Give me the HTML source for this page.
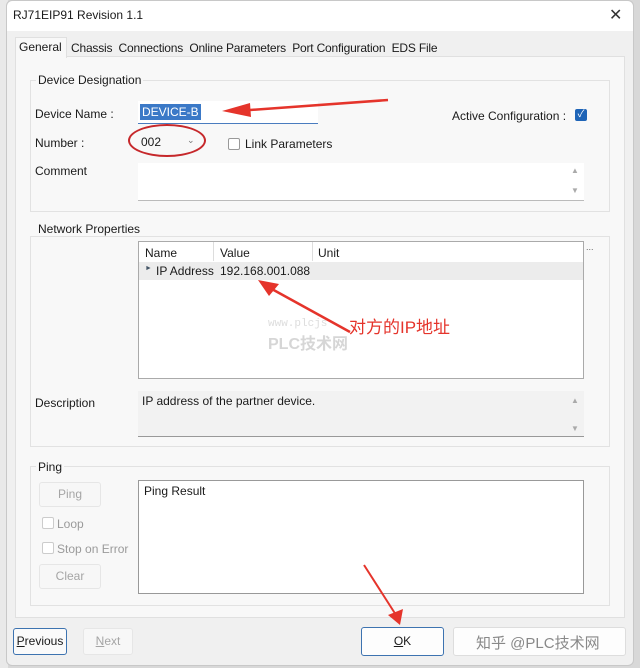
<!DOCTYPE html>
<html><head><style>
*{margin:0;padding:0;box-sizing:border-box}
body{width:640px;height:668px;position:relative;background:#d8d8d8;font-family:"Liberation Sans","Noto Sans CJK SC",sans-serif;font-size:12px;color:#1a1a1a;overflow:hidden}
.a{position:absolute}
.grp{position:absolute;border:1px solid #e2e2e2;background:#f8f8f8}
.box{position:absolute;background:#fff;border:1px solid #cfcfcf}
.btn{position:absolute;border:1px solid #e6e6e6;background:#f7f7f7;color:#a5a5a5;text-align:center;border-radius:3px}
.cb{position:absolute;width:12px;height:12px;border:1px solid #999;border-radius:2px;background:#fff}
</style></head><body>
<div class="a" style="left:0;top:0;width:8px;height:668px;background:#e9e9e9"></div>
<div class="a" style="left:6px;top:0;width:628px;height:666px;background:#f0f0f0;border:1px solid #c8c8c8;border-radius:6px"></div>
<div class="a" style="left:7px;top:1px;width:626px;height:30px;background:#fff;border-radius:6px 6px 0 0"></div>
<div class="a" style="left:13px;top:8px;font-size:12px">RJ71EIP91 Revision 1.1</div>
<div class="a" style="left:609px;top:5px;font-size:16px;color:#333">✕</div>
<div class="a" style="left:15px;top:56px;width:610px;height:562px;background:#f8f8f8;border:1px solid #e0e0e0"></div>
<div class="a" style="left:15px;top:37px;width:52px;height:21px;background:#f8f8f8;border:1px solid #e0e0e0;border-bottom:none"></div>
<div class="a" style="left:19px;top:40px;font-size:12px">General</div>
<div class="a" style="left:71px;top:41px;font-size:12px;letter-spacing:-0.2px">Chassis&nbsp; Connections&nbsp; Online Parameters&nbsp; Port Configuration&nbsp; EDS File</div>

<div class="grp" style="left:30px;top:80px;width:580px;height:132px"></div>
<div class="a" style="left:36px;top:73px;font-size:12px;background:#f8f8f8;padding:0 2px">Device Designation</div>
<div class="a" style="left:35px;top:107px">Device Name :</div>
<div class="a" style="left:138px;top:101px;width:180px;height:23px;background:#fff;border-bottom:1px solid #4a7cbf"></div>
<div class="a" style="left:140px;top:104px;background:#3b79c7;color:#fff;padding:0 2px;height:16px;line-height:16px">DEVICE-B</div>
<div class="a" style="left:452px;top:109px;font-size:12px">Active Configuration :</div>
<div class="a" style="left:575px;top:109px;width:12px;height:12px;background:#1e64b7;border-radius:2px;color:#fff;font-size:10px;line-height:12px;text-align:center">✓</div>
<div class="a" style="left:35px;top:136px">Number :</div>
<div class="a" style="left:141px;top:135px">002</div>
<div class="a" style="left:187px;top:135px;font-size:9px;color:#777">⌄</div>
<div class="a" style="left:128px;top:124px;width:78px;height:33px;border:2px solid #c6282b;border-radius:50%"></div>
<div class="cb" style="left:228px;top:138px"></div>
<div class="a" style="left:245px;top:137px;font-size:12px">Link Parameters</div>
<div class="a" style="left:35px;top:164px">Comment</div>
<div class="box" style="left:138px;top:163px;width:446px;height:38px;border:none;border-bottom:1px solid #bbb"></div>
<div class="a" style="left:571px;top:166px;font-size:8px;color:#aaa">▲</div>
<div class="a" style="left:571px;top:186px;font-size:8px;color:#aaa">▼</div>
<svg class="a" style="left:220px;top:96px" width="170" height="22"><path d="M168 4 L30 14" stroke="#e5342b" stroke-width="2.5" fill="none"/><path d="M2 15 L30 7 L31 21 Z" fill="#e5342b"/></svg>

<div class="grp" style="left:30px;top:236px;width:580px;height:211px"></div>
<div class="a" style="left:36px;top:222px;font-size:12px;background:#f8f8f8;padding:0 2px">Network Properties</div>
<div class="box" style="left:138px;top:241px;width:446px;height:138px;border-color:#aaa"></div>
<div class="a" style="left:213px;top:242px;width:1px;height:19px;background:#ddd"></div>
<div class="a" style="left:312px;top:242px;width:1px;height:19px;background:#ddd"></div>
<div class="a" style="left:145px;top:246px">Name</div>
<div class="a" style="left:220px;top:246px">Value</div>
<div class="a" style="left:318px;top:246px">Unit</div>
<div class="a" style="left:139px;top:262px;width:444px;height:18px;background:#ececec"></div>
<div class="a" style="left:145px;top:265px;font-size:7px;color:#456">►</div>
<div class="a" style="left:156px;top:264px">IP Address</div>
<div class="a" style="left:220px;top:264px">192.168.001.088</div>
<div class="a" style="left:586px;top:242px;font-size:9px;color:#666">...</div>
<div class="a" style="left:268px;top:330px;font-size:16px;font-weight:bold;color:#d6d6d6">PLC技术网</div>
<div class="a" style="left:268px;top:318px;font-size:11px;color:#ddd;font-family:'Liberation Mono',monospace">www.plcjs</div>
<svg class="a" style="left:255px;top:276px" width="100" height="60"><path d="M95 56 L15 12" stroke="#e5342b" stroke-width="2.5"/><path d="M3 4 L24 8 L14 20 Z" fill="#e5342b"/></svg>
<div class="a" style="left:349px;top:313px;font-size:17px;color:#e5342b">对方的IP地址</div>
<div class="a" style="left:35px;top:396px">Description</div>
<div class="a" style="left:138px;top:391px;width:446px;height:46px;background:#f2f2f2;border-bottom:1px solid #999"></div>
<div class="a" style="left:142px;top:394px">IP address of the partner device.</div>
<div class="a" style="left:571px;top:396px;font-size:8px;color:#aaa">▲</div>
<div class="a" style="left:571px;top:424px;font-size:8px;color:#aaa">▼</div>

<div class="grp" style="left:30px;top:466px;width:580px;height:140px"></div>
<div class="a" style="left:36px;top:460px;font-size:12px;background:#f8f8f8;padding:0 2px">Ping</div>
<div class="btn" style="left:39px;top:482px;width:62px;height:25px;line-height:23px">Ping</div>
<div class="cb" style="left:42px;top:517px;border-color:#ccc"></div>
<div class="a" style="left:57px;top:517px;color:#9a9a9a">Loop</div>
<div class="cb" style="left:42px;top:542px;border-color:#ccc"></div>
<div class="a" style="left:57px;top:542px;color:#9a9a9a">Stop on Error</div>
<div class="btn" style="left:39px;top:564px;width:62px;height:25px;line-height:23px">Clear</div>
<div class="box" style="left:138px;top:480px;width:446px;height:114px;border-color:#999"></div>
<div class="a" style="left:144px;top:484px">Ping Result</div>
<svg class="a" style="left:360px;top:563px" width="50" height="70"><path d="M4 2 L36 52" stroke="#e5342b" stroke-width="2"/><path d="M28 52 L40 62 L43 46 Z" fill="#e5342b"/></svg>

<div class="a" style="left:13px;top:628px;width:54px;height:27px;border:1px solid #3d73b0;border-radius:3px;background:#fafafa;text-align:center;line-height:25px;font-size:12px"><u>P</u>revious</div>
<div class="btn" style="left:83px;top:628px;width:50px;height:27px;line-height:25px;font-size:12px"><u>N</u>ext</div>
<div class="a" style="left:361px;top:627px;width:83px;height:29px;border:1px solid #3d73b0;border-radius:3px;background:#fdfdfd;text-align:center;line-height:27px;font-size:12px"><u>O</u>K</div>
<div class="a" style="left:453px;top:627px;width:173px;height:29px;border:1px solid #ddd;border-radius:3px;background:#fdfdfd"></div>
<div class="a" style="left:476px;top:632px;font-size:15px;color:#888">知乎 @PLC技术网</div>
</body></html>
